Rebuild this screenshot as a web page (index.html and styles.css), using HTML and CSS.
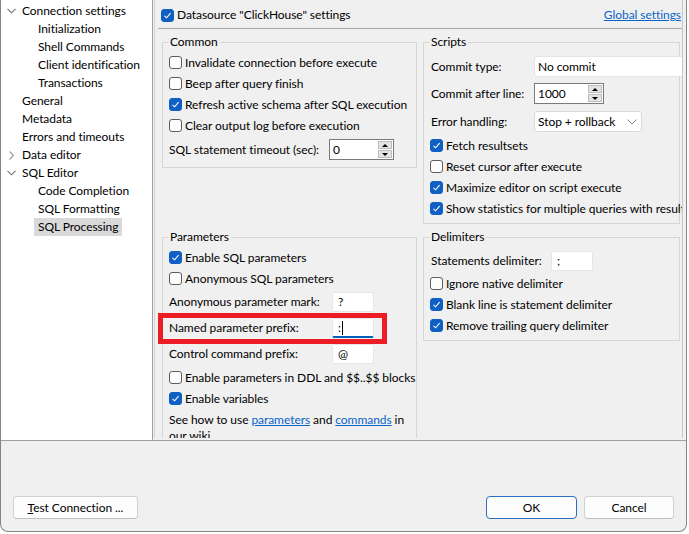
FILE: index.html
```html
<!DOCTYPE html>
<html>
<head>
<meta charset="utf-8">
<link rel="stylesheet" href="styles.css">
</head>
<body>
<div class="window">
  <div class="main">
    <nav class="tree">
      <div class="ti l0"><span class="tw"><svg width="9" height="6" viewBox="0 0 9 6"><polyline points="0.5,0.8 4.5,4.8 8.5,0.8" fill="none" stroke="#6f6f6f" stroke-width="1.1"/></svg></span>Connection settings</div>
      <div class="ti l1">Initialization</div>
      <div class="ti l1">Shell Commands</div>
      <div class="ti l1">Client identification</div>
      <div class="ti l1">Transactions</div>
      <div class="ti l0n">General</div>
      <div class="ti l0n">Metadata</div>
      <div class="ti l0n">Errors and timeouts</div>
      <div class="ti l0"><span class="tw"><svg width="5" height="9" viewBox="0 0 5 9"><polyline points="0.6,0.5 4.4,4.5 0.6,8.5" fill="none" stroke="#9a9a9a" stroke-width="1.1"/></svg></span>Data editor</div>
      <div class="ti l0"><span class="tw"><svg width="9" height="6" viewBox="0 0 9 6"><polyline points="0.5,0.8 4.5,4.8 8.5,0.8" fill="none" stroke="#6f6f6f" stroke-width="1.1"/></svg></span>SQL Editor</div>
      <div class="ti l1">Code Completion</div>
      <div class="ti l1">SQL Formatting</div>
      <div class="ti l1"><span class="sel">SQL Processing</span></div>
    </nav>
    <section class="panel">
      <header class="phead">
        <div class="cbrow"><span class="cb on"><svg width="11" height="11" viewBox="0 0 11 11"><polyline points="2.5,5.8 4.6,7.8 8.6,3.2" fill="none" stroke="#fff" stroke-width="1.1"/></svg></span>Datasource "ClickHouse" settings</div>
        <a class="link" href="#">Global settings</a>
      </header>
      <div class="groups">
        <fieldset class="grp common">
          <legend>Common</legend>
          <div class="cbrow"><span class="cb"></span>Invalidate connection before execute</div>
          <div class="cbrow"><span class="cb"></span>Beep after query finish</div>
          <div class="cbrow"><span class="cb on"><svg width="11" height="11" viewBox="0 0 11 11"><polyline points="2.5,5.8 4.6,7.8 8.6,3.2" fill="none" stroke="#fff" stroke-width="1.1"/></svg></span>Refresh active schema after SQL execution</div>
          <div class="cbrow"><span class="cb"></span>Clear output log before execution</div>
          <div class="frow timeout"><span class="flabel w-timeout">SQL statement timeout (sec):</span>
            <div class="spin w65"><span class="spin-val">0</span><span class="spin-btns"><span class="sb"><i class="up"></i></span><span class="sb"><i class="dn"></i></span></span></div>
          </div>
        </fieldset>

        <fieldset class="grp scripts">
          <legend>Scripts</legend>
          <div class="frow first"><span class="flabel w-scripts">Commit type:</span><div class="field wide">No commit</div></div>
          <div class="frow m6"><span class="flabel w-scripts">Commit after line:</span>
            <div class="spin w70"><span class="spin-val">1000</span><span class="spin-btns"><span class="sb"><i class="up"></i></span><span class="sb"><i class="dn"></i></span></span></div>
          </div>
          <div class="frow m7"><span class="flabel w-scripts">Error handling:</span>
            <div class="combo">Stop + rollback<svg class="chev" width="10" height="6" viewBox="0 0 10 6"><polyline points="0.5,0.5 5,5 9.5,0.5" fill="none" stroke="#8a8a8a" stroke-width="1"/></svg></div>
          </div>
          <div class="cbrow m3"><span class="cb on"><svg width="11" height="11" viewBox="0 0 11 11"><polyline points="2.5,5.8 4.6,7.8 8.6,3.2" fill="none" stroke="#fff" stroke-width="1.1"/></svg></span>Fetch resultsets</div>
          <div class="cbrow"><span class="cb"></span>Reset cursor after execute</div>
          <div class="cbrow"><span class="cb on"><svg width="11" height="11" viewBox="0 0 11 11"><polyline points="2.5,5.8 4.6,7.8 8.6,3.2" fill="none" stroke="#fff" stroke-width="1.1"/></svg></span>Maximize editor on script execute</div>
          <div class="cbrow"><span class="cb on"><svg width="11" height="11" viewBox="0 0 11 11"><polyline points="2.5,5.8 4.6,7.8 8.6,3.2" fill="none" stroke="#fff" stroke-width="1.1"/></svg></span>Show statistics for multiple queries with results</div>
        </fieldset>

        <fieldset class="grp params">
          <legend>Parameters</legend>
          <div class="cbrow"><span class="cb on"><svg width="11" height="11" viewBox="0 0 11 11"><polyline points="2.5,5.8 4.6,7.8 8.6,3.2" fill="none" stroke="#fff" stroke-width="1.1"/></svg></span>Enable SQL parameters</div>
          <div class="cbrow"><span class="cb"></span>Anonymous SQL parameters</div>
          <div class="prow"><span class="flabel w-params">Anonymous parameter mark:</span><div class="tfield">?</div></div>
          <div class="prow hl-row"><span class="flabel w-params">Named parameter prefix:</span><div class="tfield focus">:<span class="caret"></span></div><span class="highlight"></span></div>
          <div class="prow"><span class="flabel w-params">Control command prefix:</span><div class="tfield">@</div></div>
          <div class="cbrow"><span class="cb"></span>Enable parameters in DDL and $$..$$ blocks</div>
          <div class="cbrow"><span class="cb on"><svg width="11" height="11" viewBox="0 0 11 11"><polyline points="2.5,5.8 4.6,7.8 8.6,3.2" fill="none" stroke="#fff" stroke-width="1.1"/></svg></span>Enable variables</div>
          <p class="note">See how to use <a class="link" href="#">parameters</a> and <a class="link" href="#">commands</a> in<br>our wiki</p>
        </fieldset>

        <fieldset class="grp delims">
          <legend>Delimiters</legend>
          <div class="frow first-d"><span class="flabel w-delims">Statements delimiter:</span><div class="tfield">;</div></div>
          <div class="cbrow m2"><span class="cb"></span>Ignore native delimiter</div>
          <div class="cbrow"><span class="cb on"><svg width="11" height="11" viewBox="0 0 11 11"><polyline points="2.5,5.8 4.6,7.8 8.6,3.2" fill="none" stroke="#fff" stroke-width="1.1"/></svg></span>Blank line is statement delimiter</div>
          <div class="cbrow"><span class="cb on"><svg width="11" height="11" viewBox="0 0 11 11"><polyline points="2.5,5.8 4.6,7.8 8.6,3.2" fill="none" stroke="#fff" stroke-width="1.1"/></svg></span>Remove trailing query delimiter</div>
        </fieldset>
      </div>
    </section>
  </div>
  <footer class="bottom">
    <button class="btn btn-test"><u>T</u>est Connection ...</button>
    <div class="spacer"></div>
    <button class="btn btn-ok">OK</button>
    <button class="btn btn-cancel">Cancel</button>
  </footer>
</div>
</body>
</html>
```
FILE: styles.css
```css
* { box-sizing: border-box; }
body {
  margin: 0;
  background: #ffffff;
  font-family: Lato, "Noto Sans", sans-serif;
  font-size: 12px;
  line-height: 16px;
  letter-spacing: -0.06px;
  color: #000;
}
.window {
  width: 687px;
  height: 532px;
  border: 1px solid #858585;
  border-top: none;
  border-radius: 0 0 8px 8px;
  background: #f0f0f0;
  display: flex;
  flex-direction: column;
  overflow: hidden;
}
.main {
  height: 441px;
  flex: none;
  display: flex;
  border-bottom: 1px solid #a0a0a0;
}
/* tree */
.tree {
  width: 152px;
  flex: none;
  background: #fff;
  border-right: 1px solid #a0a0a0;
  padding-top: 2px;
}
.ti {
  height: 18px;
  line-height: 18px;
  display: flex;
  align-items: center;
  white-space: nowrap;
}
.ti.l0 { padding-left: 6px; }
.ti.l0n { padding-left: 21px; }
.ti.l1 { padding-left: 37px; }
.tw {
  width: 9px;
  margin-right: 6px;
  display: flex;
  justify-content: center;
  align-items: center;
}
.tw svg { display: block; }
.sel {
  display: inline-block;
  height: 18px;
  padding: 0 4px;
  margin-left: -4px;
  background: #d9d9d9;
}
/* panel */
.panel {
  flex: 1;
  min-width: 0;
  margin: 0 3px 2px 1px;
  border-left: 1px solid #d4d4d4;
  border-right: 1px solid #c8c8c8;
  overflow: hidden;
}
.phead {
  height: 29px;
  margin-left: 3px;
  padding: 2px 1px 0 3px;
  border-bottom: 1px solid #a8a8a8;
  display: flex;
  align-items: center;
  justify-content: space-between;
}
.link {
  color: #0a64c8;
  text-decoration: underline;
}
.groups {
  margin-top: 5px;
  padding-left: 7px;
  display: grid;
  grid-template-columns: 255px 257px;
  column-gap: 6px;
  row-gap: 5px;
  align-items: start;
}
.grp {
  margin: 0;
  min-width: 0;
  border: 1px solid #d6d6d6;
  padding: 2px 6px 7px 6px;
}
.grp legend {
  padding: 0 2px;
  margin-left: -1px;
  line-height: 16px;
}
.scripts { padding-bottom: 4px; }
.params { padding-bottom: 10px; }
.delims { padding-bottom: 4px; }

/* checkbox rows */
.cbrow {
  height: 21px;
  display: flex;
  align-items: center;
  gap: 3px;
  white-space: nowrap;
}
.cb {
  width: 13px;
  height: 13px;
  flex: none;
  border: 1px solid #5c5c5c;
  border-radius: 3px;
  background: #fdfdfd;
  display: flex;
  align-items: center;
  justify-content: center;
}
.cb.on {
  background: #0f60c2;
  border-color: #0f60c2;
}
.cb svg { display: block; }
.m2 { margin-top: 2px; }
.m3 { margin-top: 3px; }
.m6 { margin-top: 6px; }
.m7 { margin-top: 7px; }

/* form rows */
.frow {
  height: 21px;
  display: flex;
  align-items: center;
  white-space: nowrap;
}
.frow.first { margin-top: 4px; }
.frow.first-d { margin-top: 3px; }
.frow.timeout { margin-top: 3px; }
.flabel { flex: none; }
.w-timeout { width: 160px; }
.w-scripts { width: 104px; padding-left: 1px; }
.w-params { width: 163px; }
.w-delims { width: 121px; padding-left: 1px; }

.prow {
  height: 26px;
  display: flex;
  align-items: center;
  white-space: nowrap;
}
.hl-row { position: relative; }
.highlight {
  position: absolute;
  left: -11px;
  top: -2px;
  width: 229px;
  height: 31px;
  border: 5px solid #ec1c24;
}

.field {
  flex: none;
  height: 21px;
  line-height: 19px;
  background: #fff;
  border: 1px solid #e4e4e4;
  border-radius: 3px;
  padding-left: 3px;
}
.field.wide { width: 150px; }
.tfield {
  flex: none;
  width: 42px;
  height: 20px;
  line-height: 18px;
  background: #fff;
  border: 1px solid #e6e6e6;
  border-radius: 2px;
  padding-left: 5px;
  display: flex;
  align-items: center;
}
.tfield.focus {
  border-bottom: 2px solid #005fb8;
  line-height: 17px;
}
.caret {
  display: inline-block;
  width: 1px;
  height: 14px;
  background: #000;
  margin-left: 1px;
}
.spin {
  flex: none;
  height: 21px;
  background: #fff;
  border: 1px solid #7a7a7a;
  display: flex;
  align-items: center;
  padding-left: 3px;
}
.w65 { width: 65px; }
.w70 { width: 70px; }
.spin-val { flex: 1; }
.spin-btns {
  width: 14px;
  height: 17px;
  margin-right: 1px;
  display: flex;
  flex-direction: column;
  gap: 1px;
}
.sb {
  flex: 1;
  background: #e4e4e4;
  border: 1px solid #bdbdbd;
  display: flex;
  align-items: center;
  justify-content: center;
}
.sb i { display: block; width: 0; height: 0; }
.sb .up {
  border-left: 3px solid transparent;
  border-right: 3px solid transparent;
  border-bottom: 3px solid #000;
}
.sb .dn {
  border-left: 3px solid transparent;
  border-right: 3px solid transparent;
  border-top: 3px solid #000;
}
.combo {
  flex: none;
  width: 108px;
  height: 21px;
  background: #fff;
  border: 1px solid #dadada;
  border-radius: 3px;
  padding: 0 4px 0 3px;
  display: flex;
  align-items: center;
  justify-content: space-between;
}
.chev { display: block; }
.note {
  margin: 3px 0 0;
  line-height: 16px;
  white-space: nowrap;
}

/* bottom */
.bottom {
  flex: 1;
  display: flex;
  align-items: flex-start;
  padding: 55px 12px 0 12px;
  gap: 7px;
}
.spacer { flex: 1; }
.btn {
  height: 23px;
  font-family: inherit;
  font-size: 12px;
  letter-spacing: inherit;
  line-height: 20px;
  color: #000;
  background: #fdfdfd;
  border: 1px solid #d0d0d0;
  border-bottom-color: #c0c0c0;
  border-radius: 4px;
  padding: 0;
}
.btn-test { width: 125px; }
.btn-ok { width: 91px; border-color: #2a6fc0; }
.btn-cancel { width: 90px; }
```
